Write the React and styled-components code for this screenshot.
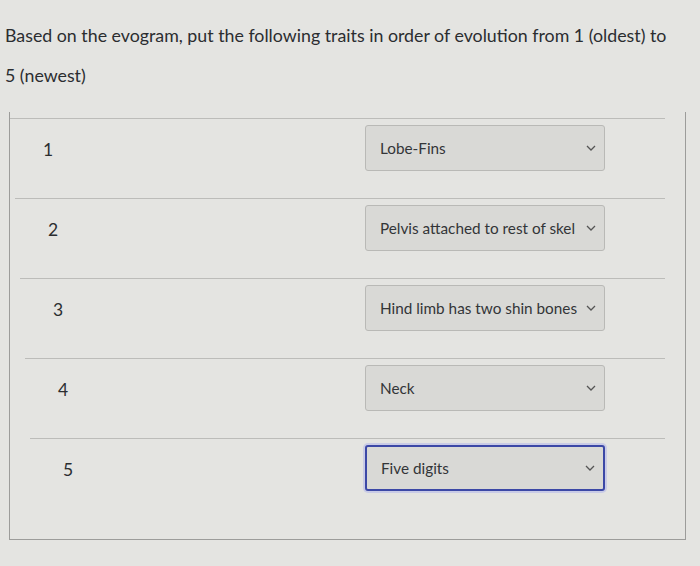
import React from "react";
import styled, { createGlobalStyle } from "styled-components";

const GlobalStyle = createGlobalStyle`
  html, body {
    margin: 0;
    padding: 0;
    background: #e4e4e1;
    font-family: Lato, "Open Sans", sans-serif;
    color: #2b2d30;
  }
`;

const traits = [
  "Lobe-Fins",
  "Pelvis attached to rest of skel",
  "Hind limb has two shin bones",
  "Neck",
  "Five digits",
];

export default function App() {
  return (
    <>
      <GlobalStyle />
      <Page>
        <Question>
          Based on the evogram, put the following traits in order of evolution
          from 1 (oldest) to 5 (newest)
        </Question>
        <AnswerBox>
          {traits.map((trait, i) => (
            <Row key={trait} $shift={i * 5}>
              <Number>{i + 1}</Number>
              <Select $focused={i === traits.length - 1}>
                <span>{trait}</span>
                <Chevron viewBox="0 0 10 6">
                  <path d="M1 1 L5 5 L9 1" />
                </Chevron>
              </Select>
            </Row>
          ))}
        </AnswerBox>
      </Page>
    </>
  );
}

const Page = styled.div`
  width: 700px;
  height: 566px;
  padding-top: 15px;
  box-sizing: border-box;
  overflow: hidden;
`;

const Question = styled.p`
  margin: 0;
  padding: 0 20px 0 5px;
  font-size: 17.8px;
  line-height: 40px;
`;

const AnswerBox = styled.div`
  margin: 17px 14px 0 9px;
  height: 428px;
  box-sizing: border-box;
  border: 1px solid #9c9c9a;
  border-top: none;
  display: flex;
  flex-direction: column;
  padding-top: 6px;
`;

const Row = styled.div`
  display: flex;
  align-items: flex-start;
  height: 80px;
  box-sizing: border-box;
  margin-left: ${(p) => p.$shift}px;
  margin-right: 20px;
  padding-top: 6px;
  border-top: 1px solid #bcbcb9;
`;

const Number = styled.div`
  padding-left: 33px;
  line-height: 50px;
  font-size: 17.5px;
  color: #2b2d30;
`;

const Select = styled.div`
  margin-left: auto;
  margin-right: 60px;
  width: 240px;
  height: 46px;
  box-sizing: border-box;
  display: flex;
  align-items: center;
  justify-content: space-between;
  padding: 0 8px 0 14px;
  background: #d9d9d6;
  border: ${(p) => (p.$focused ? "2px solid #3c48a6" : "1px solid #b9b9b6")};
  border-radius: 3px;
  box-shadow: ${(p) => (p.$focused ? "0 0 0 2px #c9cbe6" : "none")};
  font-size: 15.3px;
  color: #333538;

  span {
    white-space: nowrap;
    overflow: hidden;
  }
`;

const Chevron = styled.svg`
  width: 10px;
  height: 6px;
  flex-shrink: 0;
  margin-left: 8px;
  fill: none;
  stroke: #555;
  stroke-width: 1.3;
`;
